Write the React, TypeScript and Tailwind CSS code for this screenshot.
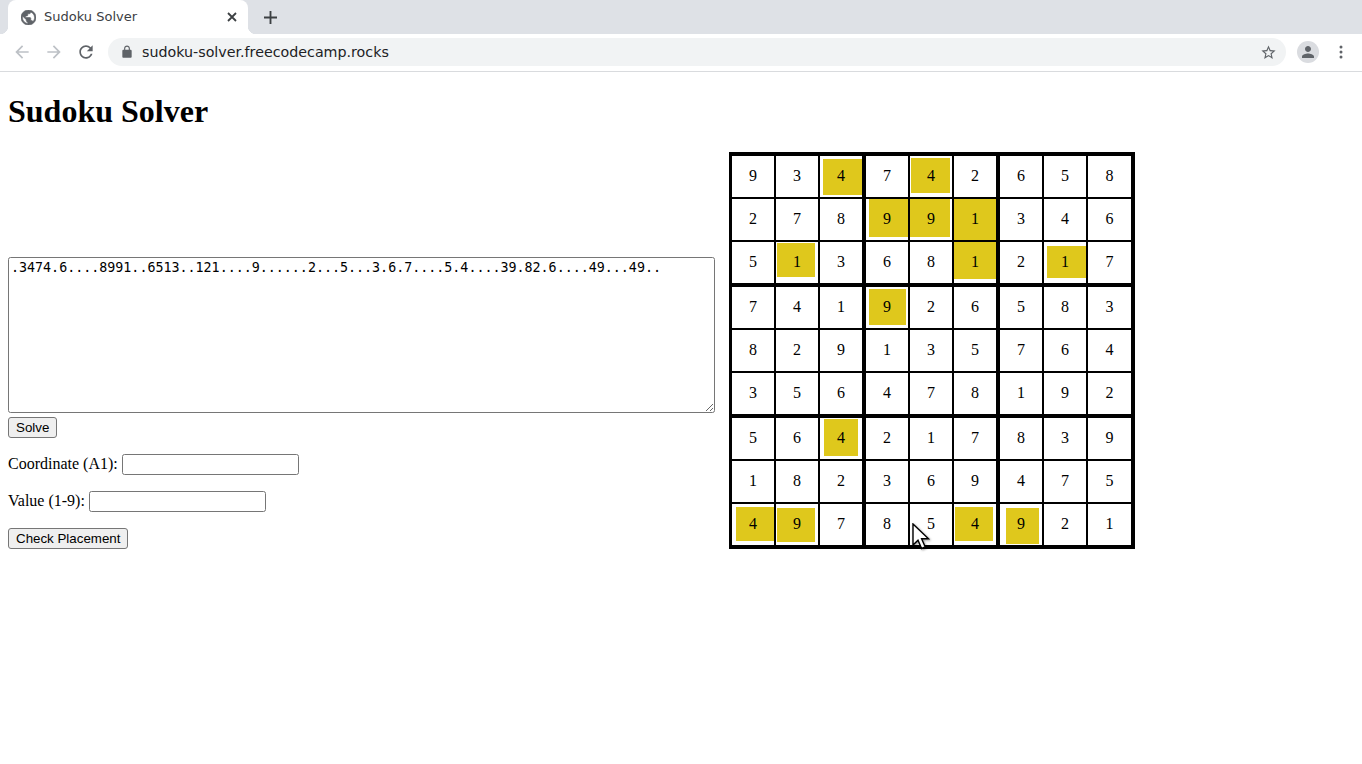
const PUZZLE =
  ".3474.6....8991..6513..121....9......2...5...3.6.7....5.4....39.82.6....49...49..";

const DIGITS = [
  "934742658",
  "278991346",
  "513681217",
  "741926583",
  "829135764",
  "356478192",
  "564217839",
  "182369475",
  "497854921",
];

// conflict highlights don't fill their cell evenly, so each one has its own insets
const HIGHLIGHTS: Record<string, string> = {
  "0-2": "top-[3px] right-0 bottom-[2px] left-[3px]",
  "0-4": "top-[2px] right-[2px] bottom-[4px] left-[1px]",
  "1-3": "top-0 right-0 bottom-[3px] left-[3px]",
  "1-4": "top-0 right-[2px] bottom-[3px] left-0",
  "1-5": "top-0 right-0 bottom-0 left-0",
  "2-1": "top-[1px] right-[3px] bottom-[6px] left-[1px]",
  "2-5": "top-0 right-0 bottom-[4px] left-0",
  "2-7": "top-[4px] right-0 bottom-[5px] left-[3px]",
  "3-3": "top-[2px] right-[2px] bottom-[3px] left-[3px]",
  "6-2": "top-[1px] right-[4px] bottom-[3px] left-[4px]",
  "8-0": "top-[3px] right-0 bottom-[4px] left-[4px]",
  "8-1": "top-[4px] right-[3px] bottom-[3px] left-[1px]",
  "8-5": "top-[3px] right-[3px] bottom-[4px] left-[1px]",
  "8-6": "top-[4px] right-[3px] bottom-[1px] left-[6px]",
};

function Icon({ d, className }: { d: string; className: string }) {
  return (
    <svg viewBox="0 0 24 24" className={className} fill="currentColor">
      <path d={d} />
    </svg>
  );
}

function BrowserChrome() {
  return (
    <header className="font-['DejaVu_Sans',sans-serif]">
      <div className="flex h-[34px] items-end bg-[#dee1e6] pl-2">
        <div className="relative flex h-[34px] w-[240px] items-center rounded-t-lg bg-white pl-[13px] pr-[11px] text-[13px] text-[#3c4043]">
          <span className="absolute bottom-0 left-[-8px] h-2 w-2 bg-[radial-gradient(circle_at_0_0,#dee1e6_8px,#ffffff_8.5px)]" />
          <span className="absolute bottom-0 right-[-8px] h-2 w-2 bg-[radial-gradient(circle_at_100%_0,#dee1e6_8px,#ffffff_8.5px)]" />
          <svg viewBox="2 2 20 20" className="h-[15px] w-[15px] text-[#5f6368]" fill="currentColor" stroke="currentColor" strokeWidth="0.8">
            <path d="M12 2C6.48 2 2 6.48 2 12s4.48 10 10 10 10-4.48 10-10S17.52 2 12 2zm-1 17.93c-3.95-.49-7-3.85-7-7.93 0-.62.08-1.21.21-1.79L9 15v1c0 1.1.9 2 2 2v1.93zm6.9-2.54c-.26-.81-1-1.39-1.9-1.39h-1v-3c0-.55-.45-1-1-1H8v-2h2c.55 0 1-.45 1-1V7h2c1.1 0 2-.9 2-2v-.41c2.93 1.19 5 4.06 5 7.41 0 2.08-.8 3.97-2.1 5.39z" />
          </svg>
          <span className="ml-2 flex-1">Sudoku Solver</span>
          <svg viewBox="0 0 10 10" className="h-[10px] w-[10px] text-[#3c4043]" stroke="currentColor" strokeWidth="1.8">
            <path d="M1 1l8 8M9 1l-8 8" />
          </svg>
        </div>
        <svg viewBox="0 0 14 14" className="mb-[10px] ml-4 h-[13px] w-[13px] text-[#3c4043]" stroke="currentColor" strokeWidth="2">
          <path d="M7 0v14M0 7h14" />
        </svg>
      </div>
      <div className="flex h-[38px] items-center border-b border-[#d9dbde] bg-white pb-[1px] pl-3">
        <Icon className="h-5 w-5 text-[#bdc1c6]" d="M20 11H7.83l5.59-5.59L12 4l-8 8 8 8 1.41-1.41L7.83 13H20v-2z" />
        <Icon className="ml-3 h-5 w-5 text-[#bdc1c6]" d="M12 4l-1.41 1.41L16.17 11H4v2h12.17l-5.58 5.59L12 20l8-8z" />
        <Icon
          className="ml-3 h-5 w-5 text-[#5f6368]"
          d="M17.65 6.35C16.2 4.9 14.21 4 12 4c-4.42 0-7.99 3.58-7.99 8s3.57 8 7.99 8c3.73 0 6.84-2.55 7.73-6h-2.08c-.82 2.33-3.04 4-5.65 4-3.31 0-6-2.69-6-6s2.69-6 6-6c1.66 0 3.14.69 4.22 1.78L13 11h7V4l-2.35 2.35z"
        />
        <div className="ml-[12px] flex h-7 w-[1178px] items-center rounded-full bg-[#f1f3f4] pl-[12px] pr-[9px] text-[14.25px] text-[#202124]">
          <Icon
            className="h-[14px] w-[14px] text-[#5f6368]"
            d="M18 8h-1V6c0-2.76-2.24-5-5-5S7 3.24 7 6v2H6c-1.1 0-2 .9-2 2v10c0 1.1.9 2 2 2h12c1.1 0 2-.9 2-2V10c0-1.1-.9-2-2-2zM9 6c0-1.66 1.34-3 3-3s3 1.34 3 3v2H9V6z"
          />
          <span className="ml-[8px] flex-1 pt-[1px]">sudoku-solver.freecodecamp.rocks</span>
          <Icon
            className="h-[17px] w-[17px] text-[#5f6368]"
            d="M22 9.24l-7.19-.62L12 2 9.19 8.63 2 9.24l5.46 4.73L5.82 21 12 17.27 18.18 21l-1.63-7.03L22 9.24zM12 15.4l-3.76 2.27 1-4.28-3.32-2.88 4.38-.38L12 6.1l1.71 4.04 4.38.38-3.32 2.88 1 4.28L12 15.4z"
          />
        </div>
        <div className="ml-[11px] flex h-[22px] w-[22px] items-center justify-center rounded-full bg-[#dadce0]">
          <Icon
            className="h-[18px] w-[18px] text-[#5f6368]"
            d="M12 12c2.21 0 4-1.79 4-4s-1.79-4-4-4-4 1.79-4 4 1.79 4 4 4zm0 2c-2.67 0-8 1.34-8 4v2h16v-2c0-2.66-5.33-4-8-4z"
          />
        </div>
        <svg viewBox="0 0 4 14" className="ml-5 h-[14px] w-1 text-[#5f6368]" fill="currentColor">
          <circle cx="2" cy="2" r="1.5" />
          <circle cx="2" cy="7" r="1.5" />
          <circle cx="2" cy="12" r="1.5" />
        </svg>
      </div>
    </header>
  );
}

function Cell({ row, col }: { row: number; col: number }) {
  const highlight = HIGHLIGHTS[`${row}-${col}`];
  return (
    <div className="relative flex items-center justify-center bg-white pb-[1px]">
      {highlight ? <span className={`absolute bg-[#dfc81c] ${highlight}`} /> : null}
      <span className="relative">{DIGITS[row][col]}</span>
    </div>
  );
}

function SudokuGrid() {
  const boxes = [0, 1, 2, 3, 4, 5, 6, 7, 8];
  const offsets = [0, 1, 2];
  return (
    <div className="relative ml-[14px] grid h-[397px] w-[406px] grid-cols-[130px_130px_131px] grid-rows-[127px_127px_127px] gap-1 bg-black py-1 pl-[3px] pr-1">
      {boxes.map((box) => (
        <div
          key={box}
          className={
            box % 3 === 2
              ? "grid grid-cols-[42px_42px_43px] grid-rows-[41px_41px_41px] gap-[2px]"
              : "grid grid-cols-[42px_42px_42px] grid-rows-[41px_41px_41px] gap-[2px]"
          }
        >
          {offsets.flatMap((r) =>
            offsets.map((c) => (
              <Cell
                key={`${r}-${c}`}
                row={Math.floor(box / 3) * 3 + r}
                col={(box % 3) * 3 + c}
              />
            )),
          )}
        </div>
      ))}
      <svg viewBox="0 0 18 27" className="absolute left-[183px] top-[371px] h-[27px] w-[18px] drop-shadow-[1px_1px_1px_rgba(0,0,0,0.4)]">
        <path d="M1 1v21l5-4.8 3.6 8.3 3.6-1.5-3.6-8.2h6.9z" fill="#ffffff" stroke="#000000" strokeWidth="1.4" />
      </svg>
    </div>
  );
}

const BUTTON =
  "block rounded-[3px] border border-[#767676] bg-[#efefef] px-[7px] py-[2px] font-['Liberation_Sans',sans-serif] text-[13.33px] leading-[15px] text-black";
const INPUT = "h-[21px] w-[177px] rounded-[2.5px] border border-[#767676] bg-white";

export default function App() {
  return (
    <div className="min-h-[764px] bg-white font-['Liberation_Serif',serif] text-base text-black">
      <BrowserChrome />
      <main className="px-2">
        <h1 className="mb-[22px] mt-[21px] text-[32px] font-bold leading-[37px]">Sudoku Solver</h1>
        <div className="flex items-stretch">
          <form className="flex w-[707px] flex-col justify-end">
            <textarea
              readOnly
              defaultValue={PUZZLE}
              className="block h-[156px] w-full resize rounded-[2.5px] border border-[#767676] bg-white px-[2px] py-[2px] font-['DejaVu_Sans_Mono',monospace] text-[13.33px] leading-[15.5px] text-black"
            />
            <button type="button" className={`${BUTTON} mt-1 self-start`}>
              Solve
            </button>
            <label className="mt-4 flex items-start gap-1 leading-[19px]">
              Coordinate (A1):
              <input type="text" className={INPUT} />
            </label>
            <label className="mt-4 flex items-start gap-1 leading-[19px]">
              Value (1-9):
              <input type="text" className={INPUT} />
            </label>
            <button type="button" className={`${BUTTON} mt-4 self-start`}>
              Check Placement
            </button>
          </form>
          <SudokuGrid />
        </div>
      </main>
    </div>
  );
}
